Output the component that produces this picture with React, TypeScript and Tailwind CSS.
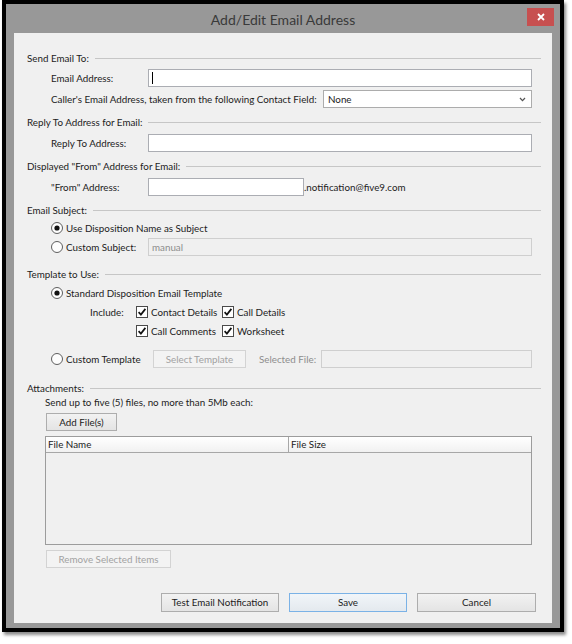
import type { ReactNode } from "react";

function SectionHeader({ label }: { label: string }) {
  return (
    <div className="flex h-[14px] items-center pl-[13px] pr-[11px]">
      <span className="whitespace-nowrap">{label}</span>
      <div className="ml-[6px] h-px flex-1 bg-[#c6c6c6]" />
    </div>
  );
}

function TextBox({ disabled, value, caret, className = "" }: { disabled?: boolean; value?: string; caret?: boolean; className?: string }) {
  return (
    <div
      className={`flex h-[18px] items-center border px-[3px] ${
        disabled ? "border-[#cfcfcf] bg-[#f0f0f0] text-[#8d8d8d]" : "border-[#abadb3] bg-white"
      } ${className}`}
    >
      {caret && <span className="h-[12px] w-px bg-black" />}
      {value}
    </div>
  );
}

function Radio({ checked }: { checked?: boolean }) {
  return (
    <svg width="12" height="12" viewBox="0 0 12 12" className="shrink-0">
      <circle cx="6" cy="6" r="5.5" fill="#fdfdfd" stroke="#5e5e5e" />
      {checked && <circle cx="6" cy="6" r="2.6" fill="#111" />}
    </svg>
  );
}

function Check() {
  return (
    <svg width="12" height="12" viewBox="0 0 12 12" className="shrink-0">
      <rect x="0.5" y="0.5" width="11" height="11" fill="#fff" stroke="#4a4a4a" />
      <path d="M2.6 6.2 L4.9 8.6 L9.4 2.9" fill="none" stroke="#111" strokeWidth="1.7" />
    </svg>
  );
}

function CheckItem({ label }: { label: string }) {
  return (
    <div className="flex items-center gap-[3px]">
      <Check />
      <span className="whitespace-nowrap">{label}</span>
    </div>
  );
}

function Button({
  children,
  className = "",
  disabled,
  primary,
}: {
  children: ReactNode;
  className?: string;
  disabled?: boolean;
  primary?: boolean;
}) {
  const look = disabled
    ? "border-[#d3d3d3] bg-[#f3f3f3] text-[#a2a2a2]"
    : primary
      ? "border-[#7bb2e6] bg-gradient-to-b from-[#f1f5f9] to-[#e4e9ee]"
      : "border-[#adadad] bg-gradient-to-b from-[#f2f2f2] to-[#e4e4e4]";
  return (
    <div className={`flex h-[18px] items-center justify-center border ${look} ${className}`}>{children}</div>
  );
}

export default function App() {
  return (
    <div className="h-[644px] w-[572px] bg-white pl-[2px] text-[9.8px] text-[#1c1c1c] [font-family:Lato,'Liberation_Sans',sans-serif]">
      <div className="w-[562px] border-4 border-black bg-[#989898] shadow-[2px_3px_3px_rgba(0,0,0,0.45)]">
        <div className="grid h-[29px] grid-cols-[1fr_auto_1fr] items-center">
          <div />
          <div className="pt-[2px] text-[14px] text-[#3a3a3a]">Add/Edit Email Address</div>
          <div className="flex justify-end self-start pt-[4px] pr-[6px]">
            <div className="flex h-[18px] w-[27px] items-center justify-center bg-[#c75050]">
              <svg width="8" height="8" viewBox="0 0 8 8">
                <path d="M1 1 L7 7 M7 1 L1 7" stroke="#fff" strokeWidth="1.8" />
              </svg>
            </div>
          </div>
        </div>

        <div className="mx-[8px] mb-[5px] flex h-[590px] flex-col bg-[#f0f0f0] pt-[18px]">
          <SectionHeader label="Send Email To:" />
          <div className="mt-[4px] grid grid-cols-[97px_1fr] items-center pl-[37px] pr-[20px]">
            <span>Email Address:</span>
            <TextBox caret />
          </div>
          <div className="mt-[3px] flex items-center pl-[37px] pr-[20px]">
            <span className="whitespace-nowrap">Caller's Email Address, taken from the following Contact Field:</span>
            <div className="ml-auto flex h-[18px] w-[209px] items-center justify-between border border-[#acacac] bg-white pl-[4px] pr-[5px]">
              <span>None</span>
              <svg width="7" height="5" viewBox="0 0 7 5">
                <path d="M1 1 L3.5 3.6 L6 1" fill="none" stroke="#555" strokeWidth="1.3" />
              </svg>
            </div>
          </div>

          <div className="mt-[7px]">
            <SectionHeader label="Reply To Address for Email:" />
          </div>
          <div className="mt-[5px] grid grid-cols-[97px_1fr] items-center pl-[37px] pr-[20px]">
            <span>Reply To Address:</span>
            <TextBox />
          </div>

          <div className="mt-[7px]">
            <SectionHeader label={'Displayed "From" Address for Email:'} />
          </div>
          <div className="mt-[5px] grid grid-cols-[97px_156px_1fr] items-center pl-[37px] pr-[20px]">
            <span>"From" Address:</span>
            <TextBox />
            <span>.notification@five9.com</span>
          </div>

          <div className="mt-[7px]">
            <SectionHeader label="Email Subject:" />
          </div>
          <div className="mt-[3px] flex h-[16px] items-center gap-[3px] pl-[37px]">
            <Radio checked />
            <span>Use Disposition Name as Subject</span>
          </div>
          <div className="mt-[2px] grid grid-cols-[97px_1fr] items-center pl-[37px] pr-[20px]">
            <div className="flex items-center gap-[3px]">
              <Radio />
              <span>Custom Subject:</span>
            </div>
            <TextBox disabled value="manual" />
          </div>

          <div className="mt-[11px]">
            <SectionHeader label="Template to Use:" />
          </div>
          <div className="mt-[4px] flex h-[16px] items-center gap-[3px] pl-[37px]">
            <Radio checked />
            <span>Standard Disposition Email Template</span>
          </div>
          <div className="mt-[2px] grid h-[18px] grid-cols-[46px_86px_auto] items-center pl-[76px]">
            <span>Include:</span>
            <CheckItem label="Contact Details" />
            <CheckItem label="Call Details" />
          </div>
          <div className="mt-[1px] grid h-[18px] grid-cols-[46px_86px_auto] items-center pl-[76px]">
            <span />
            <CheckItem label="Call Comments" />
            <CheckItem label="Worksheet" />
          </div>
          <div className="mt-[10px] flex items-center pl-[37px] pr-[20px]">
            <div className="flex w-[102px] items-center gap-[3px]">
              <Radio />
              <span>Custom Template</span>
            </div>
            <Button disabled className="w-[93px]">
              Select Template
            </Button>
            <span className="ml-[13px] w-[62px] text-[#8d8d8d]">Selected File:</span>
            <TextBox disabled className="flex-1" />
          </div>

          <div className="mt-[13px]">
            <SectionHeader label="Attachments:" />
          </div>
          <div className="flex h-[14px] items-center pl-[31px]">Send up to five (5) files, no more than 5Mb each:</div>
          <div className="mt-[4px] pl-[32px]">
            <Button className="w-[71px]">Add File(s)</Button>
          </div>
          <div className="mt-[5px] ml-[31px] mr-[20px] flex h-[109px] flex-col border border-[#9c9c9c]">
            <div className="flex h-[16px] border-b border-[#a7a7a7] bg-gradient-to-b from-white to-[#f1f1f1]">
              <div className="flex w-[243px] items-center border-r border-[#a7a7a7] pl-[2px]">File Name</div>
              <div className="flex flex-1 items-center pl-[2px]">File Size</div>
            </div>
          </div>
          <div className="mt-[5px] pl-[32px]">
            <Button disabled className="w-[125px]">
              Remove Selected Items
            </Button>
          </div>

          <div className="mt-[25px] flex justify-end gap-[10px] pr-[16px]">
            <Button className="h-[19px] w-[118px]">Test Email Notification</Button>
            <Button primary className="h-[19px] w-[118px]">
              Save
            </Button>
            <Button className="h-[19px] w-[119px]">Cancel</Button>
          </div>
        </div>
      </div>
    </div>
  );
}
